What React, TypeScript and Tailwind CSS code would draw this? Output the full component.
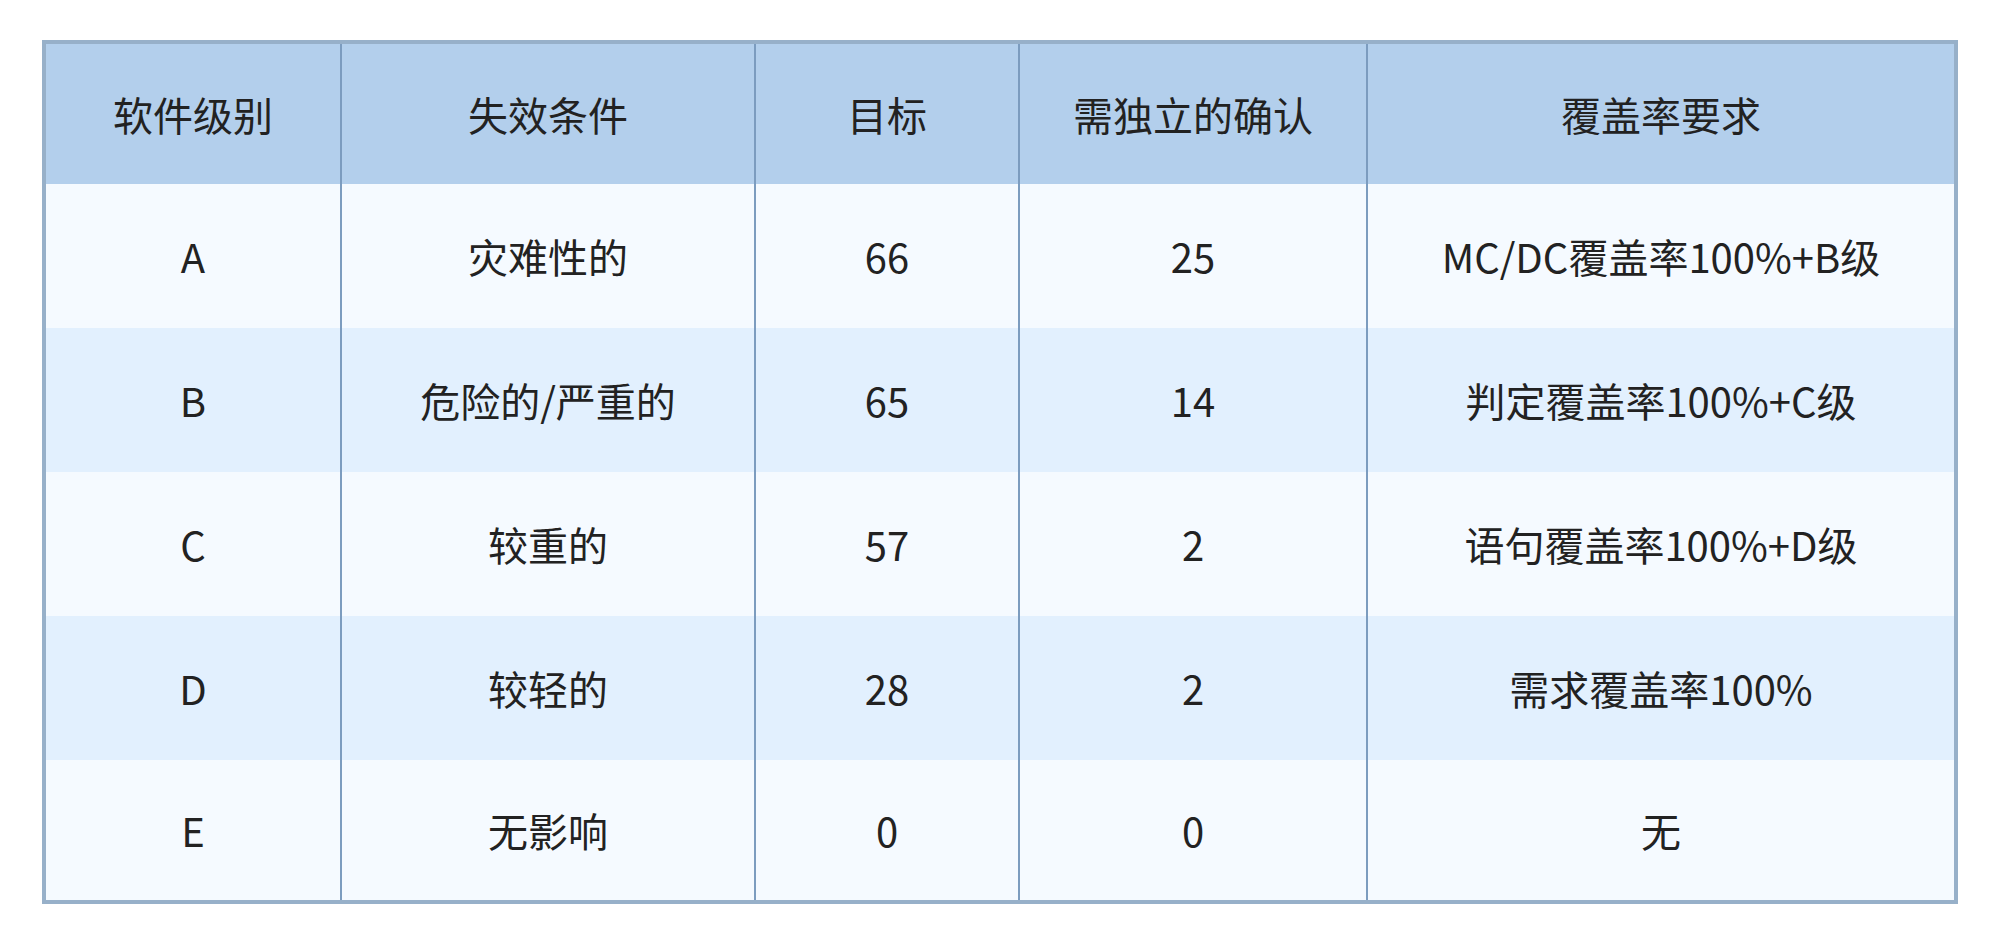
const headers = ['软件级别', '失效条件', '目标', '需独立的确认', '覆盖率要求'];

const rows = [
  ['A', '灾难性的', '66', '25', 'MC/DC覆盖率100%+B级'],
  ['B', '危险的/严重的', '65', '14', '判定覆盖率100%+C级'],
  ['C', '较重的', '57', '2', '语句覆盖率100%+D级'],
  ['D', '较轻的', '28', '2', '需求覆盖率100%'],
  ['E', '无影响', '0', '0', '无'],
];

const gridCols = 'grid grid-cols-[294px_414px_264px_348px_588px]';

function Cell({ text, first }: { text: string; first: boolean }) {
  return (
    <div
      className={`flex items-center justify-center ${first ? '' : 'border-l-2 border-[#7c9cbf]'}`}
    >
      {text}
    </div>
  );
}

export default function App() {
  return (
    <div className="w-[1994px] h-[942px] bg-white pt-[40px] pl-[42px] font-['Noto_Sans_CJK_SC','Noto_Sans',sans-serif] text-[40px] text-[#222222]">
      <div className="w-[1916px] border-4 border-[#97b0c9]">
        <div className={`${gridCols} h-[140px] bg-[#b3cfec]`}>
          {headers.map((h, i) => (
            <Cell key={h} text={h} first={i === 0} />
          ))}
        </div>
        {rows.map((r, ri) => (
          <div
            key={r[0]}
            className={`${gridCols} ${ri === rows.length - 1 ? 'h-[140px]' : 'h-[144px]'} ${
              ri % 2 === 0 ? 'bg-[#f5faff]' : 'bg-[#e2f0fe]'
            }`}
          >
            {r.map((c, i) => (
              <Cell key={i} text={c} first={i === 0} />
            ))}
          </div>
        ))}
      </div>
    </div>
  );
}
